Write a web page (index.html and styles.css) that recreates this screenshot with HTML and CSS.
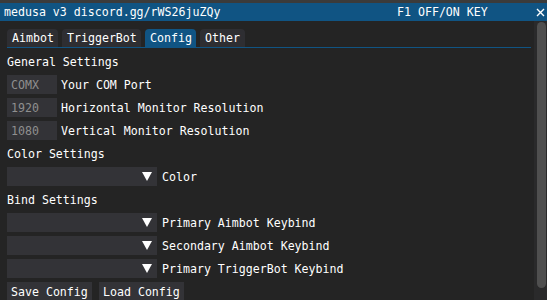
FILE: index.html
```html
<!DOCTYPE html>
<html lang="en">
<head>
    <meta charset="UTF-8">
    <title>medusa v3</title>
    <link rel="stylesheet" href="styles.css">
</head>
<body>
    <div class="window">
        <div class="titlebar">
            <span class="title">medusa v3 discord.gg/rWS26juZQy</span>
            <span class="hotkey">F1 OFF/ON KEY</span>
            <svg class="close" width="9" height="9" viewBox="0 0 9 9">
                <path d="M1 1 L8 8 M8 1 L1 8" stroke="#fff" stroke-width="1.4" fill="none"/>
            </svg>
        </div>

        <div class="main">
            <div class="content">
                <div class="tabbar">
                    <div class="tab tab-aimbot">Aimbot</div>
                    <div class="tab tab-trigger">TriggerBot</div>
                    <div class="tab tab-config active">Config</div>
                    <div class="tab tab-other">Other</div>
                </div>

                <div class="rows">
                    <div class="row"><span class="label">General Settings</span></div>
                    <div class="row">
                        <div class="input">COMX</div>
                        <span class="label">Your COM Port</span>
                    </div>
                    <div class="row">
                        <div class="input">1920</div>
                        <span class="label">Horizontal Monitor Resolution</span>
                    </div>
                    <div class="row">
                        <div class="input">1080</div>
                        <span class="label">Vertical Monitor Resolution</span>
                    </div>

                    <div class="row"><span class="label">Color Settings</span></div>
                    <div class="row">
                        <div class="combo"><span class="arrow"></span></div>
                        <span class="label">Color</span>
                    </div>

                    <div class="row"><span class="label">Bind Settings</span></div>
                    <div class="row">
                        <div class="combo"><span class="arrow"></span></div>
                        <span class="label">Primary Aimbot Keybind</span>
                    </div>
                    <div class="row">
                        <div class="combo"><span class="arrow"></span></div>
                        <span class="label">Secondary Aimbot Keybind</span>
                    </div>
                    <div class="row">
                        <div class="combo"><span class="arrow"></span></div>
                        <span class="label">Primary TriggerBot Keybind</span>
                    </div>

                    <div class="row buttons">
                        <div class="button">Save Config</div>
                        <div class="button">Load Config</div>
                    </div>
                </div>
            </div>

            <div class="scrollbar">
                <div class="thumb"></div>
            </div>
        </div>
    </div>
</body>
</html>
```

FILE: styles.css
```css
body {
    margin: 0;
    background: #242424;
    font-family: 'DejaVu Sans Mono', 'Liberation Mono', monospace;
    font-size: 11.6px;
    color: #ffffff;
    overflow: hidden;
}

.window {
    width: 547px;
    height: 300px;
    border-top: 3px solid #3b3b3b;
    box-sizing: border-box;
    display: flex;
    flex-direction: column;
    overflow: hidden;
}

.titlebar {
    height: 18px;
    flex-shrink: 0;
    background: #105483;
    display: flex;
    align-items: center;
    padding-left: 4px;
    line-height: 18px;
    white-space: pre;
}

.title {
    width: 393px;
}

.hotkey {
    width: 139px;
}

.close {
    display: block;
}

.main {
    flex: 1;
    display: flex;
    min-height: 0;
}

.content {
    flex: 1;
    padding: 8px 3px 0 7px;
}

.tabbar {
    display: flex;
    gap: 4px;
    height: 18px;
    border-bottom: 1px solid #105483;
}

.tab {
    height: 18px;
    line-height: 19px;
    padding-left: 5px;
    background: #2e2e32;
    border-radius: 4px 4px 0 0;
    box-sizing: border-box;
    white-space: pre;
}

.tab.active {
    background: #105483;
}

.tab-aimbot { width: 51px; }
.tab-trigger { width: 79px; }
.tab-config { width: 51px; }
.tab-other { width: 45px; }

.rows {
    display: flex;
    flex-direction: column;
    gap: 4px;
    margin-top: 4px;
}

.row {
    height: 19px;
    line-height: 20px;
    display: flex;
    gap: 4px;
    white-space: pre;
    flex-shrink: 0;
}

.input {
    width: 50px;
    background: #333337;
    color: #8f8f8f;
    padding-left: 4px;
    box-sizing: border-box;
}

.combo {
    width: 150px;
    background: #333337;
    position: relative;
}

.arrow {
    position: absolute;
    right: 5px;
    top: 5px;
    width: 0;
    height: 0;
    border-left: 5px solid transparent;
    border-right: 5px solid transparent;
    border-top: 9px solid #ffffff;
}

.combo + .label {
    margin-left: 1px;
}

.buttons {
    gap: 7px;
}

.button {
    width: 85px;
    background: #333337;
    padding-left: 4px;
    box-sizing: border-box;
}

.scrollbar {
    width: 13px;
    flex-shrink: 0;
    background: #2a2a2b;
    padding: 1px 1px 0 3px;
    box-sizing: border-box;
}

.thumb {
    height: 266px;
    background: #4f4f4f;
    border-radius: 5px;
}
```
